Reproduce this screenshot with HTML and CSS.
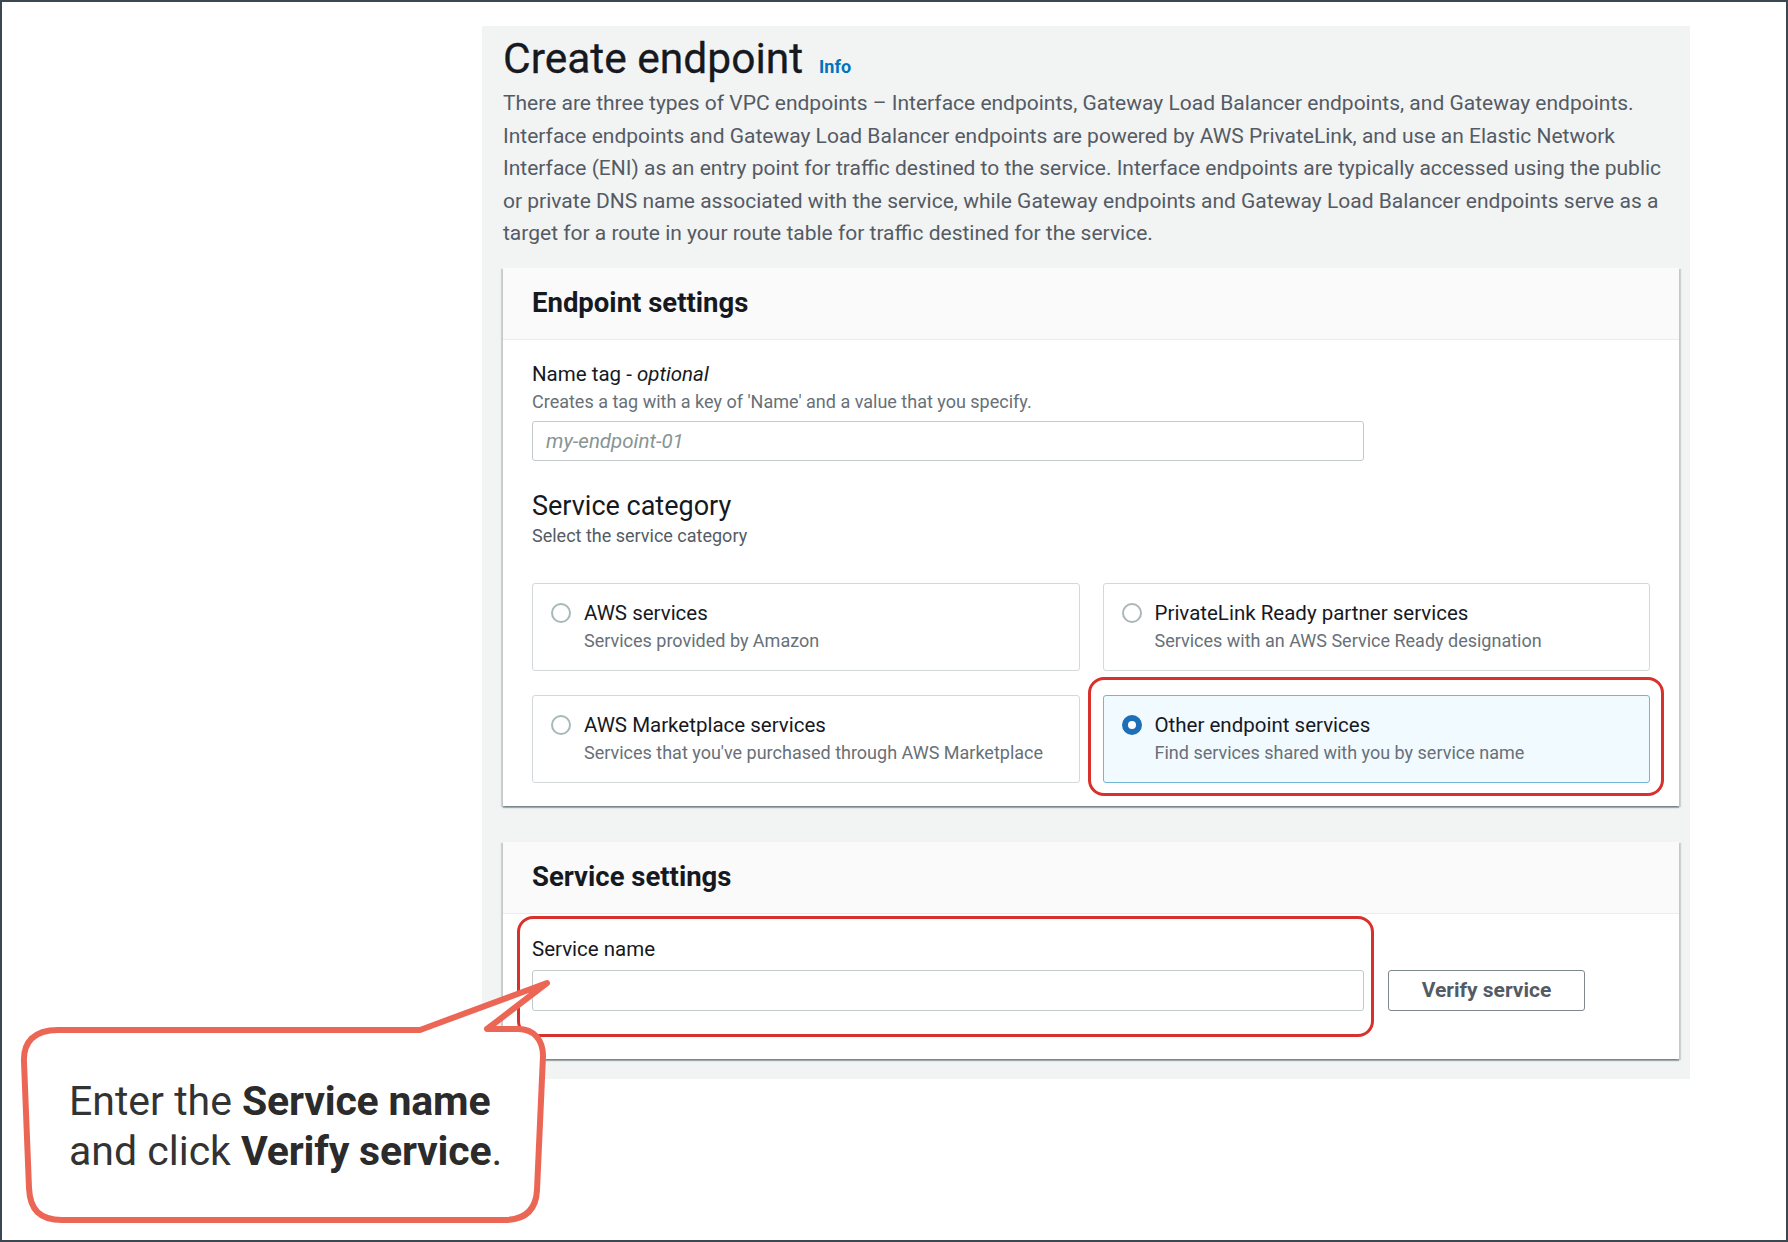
FILE: index.html
```html
<!DOCTYPE html>
<html lang="en">
<head>
<meta charset="utf-8">
<title>Create endpoint</title>
<link rel="stylesheet" href="styles.css">
</head>
<body>
<div class="frame">
  <main class="panel">
    <div class="page-head">
      <h1 class="title">Create endpoint</h1>
      <span class="info">Info</span>
    </div>
    <p class="desc">There are three types of VPC endpoints – Interface endpoints, Gateway Load Balancer endpoints, and Gateway endpoints. Interface endpoints and Gateway Load Balancer endpoints are powered by AWS PrivateLink, and use an Elastic Network Interface (ENI) as an entry point for traffic destined to the service. Interface endpoints are typically accessed using the public or private DNS name associated with the service, while Gateway endpoints and Gateway Load Balancer endpoints serve as a target for a route in your route table for traffic destined for the service.</p>

    <section class="card">
      <div class="card-head"><h2 class="card-title">Endpoint settings</h2></div>
      <div class="card-body">
        <div class="field">
          <div class="label">Name tag - <i>optional</i></div>
          <div class="hint">Creates a tag with a key of 'Name' and a value that you specify.</div>
          <input class="input" type="text" placeholder="my-endpoint-01">
        </div>
        <h3 class="section-title">Service category</h3>
        <div class="section-sub">Select the service category</div>
        <div class="tiles">
          <div class="tile">
            <span class="radio"></span>
            <div class="tile-text">
              <div class="tile-title">AWS services</div>
              <div class="tile-desc">Services provided by Amazon</div>
            </div>
          </div>
          <div class="tile">
            <span class="radio"></span>
            <div class="tile-text">
              <div class="tile-title">PrivateLink Ready partner services</div>
              <div class="tile-desc">Services with an AWS Service Ready designation</div>
            </div>
          </div>
          <div class="tile">
            <span class="radio"></span>
            <div class="tile-text">
              <div class="tile-title">AWS Marketplace services</div>
              <div class="tile-desc">Services that you've purchased through AWS Marketplace</div>
            </div>
          </div>
          <div class="tile tile-selected highlight-tile">
            <span class="radio radio-on"></span>
            <div class="tile-text">
              <div class="tile-title">Other endpoint services</div>
              <div class="tile-desc">Find services shared with you by service name</div>
            </div>
          </div>
        </div>
      </div>
    </section>

    <section class="card card-second">
      <div class="card-head"><h2 class="card-title">Service settings</h2></div>
      <div class="card-body card-body-service">
        <div class="service-row">
          <div class="field field-service highlight-field">
            <div class="label">Service name</div>
            <input class="input input-service" type="text">
          </div>
          <button class="btn" type="button">Verify service</button>
        </div>
      </div>
    </section>
  </main>

  <div class="callout">
    <svg class="callout-shape" width="560" height="275" viewBox="0 0 560 275" xmlns="http://www.w3.org/2000/svg">
      <path d="M 46 68 L 408 68 L 535 21 L 475 67 L 506 67 C 522 67 531 78 531 94 L 525 228 C 524 249 512 258 492 258 L 50 258 C 28 258 18 248 17 226 L 12 100 C 11 80 22 68 46 68 Z"
            fill="#ffffff" stroke="#ec6656" stroke-width="6" stroke-linejoin="round"/>
    </svg>
    <p class="callout-text">Enter the <b>Service name</b><br>and click <b>Verify service</b>.</p>
  </div>
</div>
</body>
</html>
```

FILE: styles.css
```css
* {
  box-sizing: border-box;
}

html,
body {
  margin: 0;
  padding: 0;
  background: #ffffff;
}

body {
  font-family: Roboto, "Liberation Sans", Arial, sans-serif;
  color: #16191f;
}

.frame {
  position: relative;
  width: 1788px;
  height: 1242px;
  border: 2px solid #3b4852;
  background: #ffffff;
  overflow: hidden;
}

.panel {
  margin: 24px 0 0 480px;
  width: 1208px;
  height: 1053px;
  background: #f2f3f3;
  padding: 8px 11px 0 21px;
}

.page-head {
  display: flex;
  align-items: baseline;
  gap: 16px;
  height: 50px;
}

.title {
  margin: 0;
  font-size: 42.5px;
  font-weight: 400;
  line-height: 50px;
  color: #16191f;
  -webkit-text-stroke: 0.3px #16191f;
}

.info {
  font-size: 18px;
  font-weight: 700;
  color: #0073bb;
}

.desc {
  margin: 3px 0 0;
  font-size: 21px;
  line-height: 32.5px;
  color: #545b64;
}

.card {
  margin-top: 18px;
  background: #ffffff;
  box-shadow: 0 2px 1px 0 rgba(0, 28, 36, 0.3),
              2px 1px 1px 0 rgba(0, 28, 36, 0.15),
              -2px 1px 1px 0 rgba(0, 28, 36, 0.15);
}

.card-second {
  margin-top: 36px;
}

.card-head {
  display: flex;
  align-items: center;
  height: 72px;
  padding: 0 29px;
  background: #fafafa;
  border-bottom: 1px solid #eaeded;
}

.card-title {
  margin: 0;
  font-size: 27.5px;
  font-weight: 700;
  line-height: 36px;
  color: #16191f;
}

.card-body {
  padding: 20px 29px 23px;
}

.card-body-service {
  padding: 21px 29px 48px;
}

.field {
  display: flex;
  flex-direction: column;
  width: 832px;
}

.label {
  font-size: 20.5px;
  line-height: 28px;
  color: #16191f;
}

.hint {
  margin-top: 2px;
  font-size: 18px;
  line-height: 24px;
  color: #687078;
}

.input {
  margin-top: 7px;
  height: 40px;
  width: 832px;
  padding: 0 13px;
  border: 1px solid #c2cacb;
  border-radius: 3px;
  background: #ffffff;
  font-family: Roboto, "Liberation Sans", Arial, sans-serif;
  font-size: 20.5px;
  color: #16191f;
  outline: none;
}

.input::placeholder {
  font-style: italic;
  color: #879596;
}

.input-service {
  height: 41px;
}

.section-title {
  margin: 27px 0 0;
  font-size: 27px;
  font-weight: 400;
  line-height: 36px;
  color: #16191f;
}

.section-sub {
  font-size: 18px;
  line-height: 24px;
  color: #545b64;
}

.tiles {
  display: grid;
  grid-template-columns: 1fr 1fr;
  column-gap: 23px;
  row-gap: 24px;
  margin-top: 35px;
}

.tile {
  display: flex;
  align-items: flex-start;
  gap: 13px;
  height: 88px;
  padding: 15px 18px 0;
  border: 1px solid #d3d9da;
  border-radius: 3px;
  background: #ffffff;
}

.tile-selected {
  background: #f1faff;
  border-color: #72b6d6;
}

.radio {
  flex: none;
  width: 20px;
  height: 20px;
  margin-top: 4px;
  border: 2px solid #aab7b8;
  border-radius: 50%;
  background: #ffffff;
}

.radio-on {
  border: 6px solid #1e6fb6;
}

.tile-title {
  font-size: 20.5px;
  line-height: 28px;
  color: #16191f;
}

.tile-desc {
  margin-top: 2px;
  font-size: 18px;
  line-height: 24px;
  color: #687078;
}

.highlight-tile,
.highlight-field {
  position: relative;
}

.highlight-tile::after {
  content: "";
  position: absolute;
  left: -16px;
  right: -15px;
  top: -19px;
  bottom: -14px;
  border: 3.5px solid #d8302a;
  border-radius: 16px;
}

.highlight-field::after {
  content: "";
  position: absolute;
  left: -15px;
  right: -10px;
  top: -19px;
  bottom: -26px;
  border: 3.5px solid #d8302a;
  border-radius: 16px;
}

.service-row {
  display: flex;
  align-items: flex-end;
  gap: 24px;
}

.btn {
  height: 41px;
  width: 197px;
  padding: 0;
  border: 1px solid #7d878e;
  border-radius: 3px;
  background: #ffffff;
  font-family: Roboto, "Liberation Sans", Arial, sans-serif;
  font-size: 21px;
  font-weight: 700;
  color: #545b64;
}

.callout {
  position: absolute;
  left: 10px;
  top: 960px;
  width: 560px;
  height: 275px;
}

.callout-shape {
  position: absolute;
  left: 0;
  top: 0;
  overflow: visible;
}

.callout-text {
  position: relative;
  margin: 0;
  padding: 114px 0 0 57px;
  font-family: Roboto, "Liberation Sans", Arial, sans-serif;
  font-size: 41px;
  line-height: 50px;
  color: #333333;
}

.callout-text b {
  font-weight: 700;
  color: #2b2b2b;
  letter-spacing: -0.2px;
}
```
